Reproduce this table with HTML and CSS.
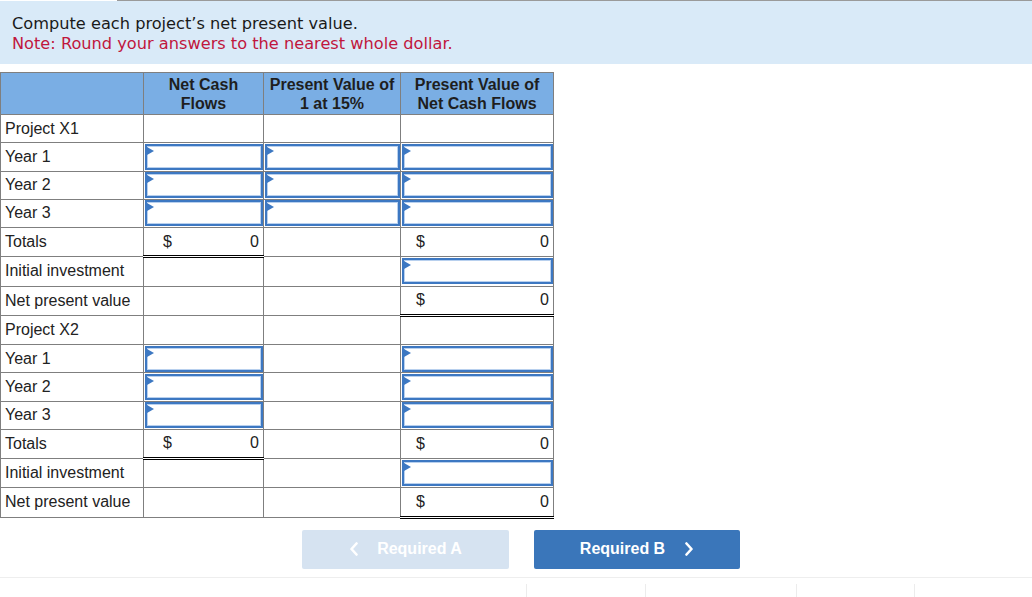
FILE: index.html
```html
<!DOCTYPE html>
<html>
<head>
<meta charset="utf-8">
<link rel="stylesheet" href="styles.css">
</head>
<body>
<div class="topline"><div class="topline-gap"></div><div class="topline-bar"></div></div>
<div class="banner">
  <p class="q">Compute each project’s net present value.</p>
  <p class="note">Note: Round your answers to the nearest whole dollar.</p>
</div>
<table class="grid">
  <colgroup>
    <col class="c0"><col class="c1"><col class="c2"><col class="c3">
  </colgroup>
  <thead>
    <tr>
      <th></th>
      <th>Net Cash<br>Flows</th>
      <th>Present Value of<br>1 at 15%</th>
      <th>Present Value of<br>Net Cash Flows</th>
    </tr>
  </thead>
  <tbody>
    <tr><td class="lbl">Project X1</td><td></td><td></td><td></td></tr>
    <tr><td class="lbl">Year 1</td><td class="in"><div class="box"></div></td><td class="in"><div class="box"></div></td><td class="in"><div class="box"></div></td></tr>
    <tr><td class="lbl">Year 2</td><td class="in"><div class="box"></div></td><td class="in"><div class="box"></div></td><td class="in"><div class="box"></div></td></tr>
    <tr><td class="lbl">Year 3</td><td class="in"><div class="box"></div></td><td class="in"><div class="box"></div></td><td class="in"><div class="box"></div></td></tr>
    <tr><td class="lbl">Totals</td><td class="val dbl top"><span>$</span><span>0</span></td><td></td><td class="val top wide"><span>$</span><span>0</span></td></tr>
    <tr><td class="lbl">Initial investment</td><td></td><td></td><td class="in"><div class="box"></div></td></tr>
    <tr><td class="lbl">Net present value</td><td></td><td></td><td class="val dbl top wide"><span>$</span><span>0</span></td></tr>
    <tr><td class="lbl">Project X2</td><td></td><td></td><td></td></tr>
    <tr><td class="lbl">Year 1</td><td class="in"><div class="box"></div></td><td></td><td class="in"><div class="box"></div></td></tr>
    <tr><td class="lbl">Year 2</td><td class="in"><div class="box"></div></td><td></td><td class="in"><div class="box"></div></td></tr>
    <tr><td class="lbl">Year 3</td><td class="in"><div class="box"></div></td><td></td><td class="in"><div class="box"></div></td></tr>
    <tr><td class="lbl">Totals</td><td class="val dbl top"><span>$</span><span>0</span></td><td></td><td class="val top wide"><span>$</span><span>0</span></td></tr>
    <tr><td class="lbl">Initial investment</td><td></td><td></td><td class="in"><div class="box"></div></td></tr>
    <tr><td class="lbl">Net present value</td><td></td><td></td><td class="val dbl top wide"><span>$</span><span>0</span></td></tr>
  </tbody>
</table>
<div class="nav">
  <div class="btn btn-off"><svg class="chev chev-l" width="10" height="14" viewBox="0 0 10 14"><path d="M7.5 1.5 L2.5 7 L7.5 12.5" fill="none" stroke="#fff" stroke-width="2.6" stroke-linecap="round" stroke-linejoin="round"/></svg>Required A</div>
  <div class="btn btn-on">Required B<svg class="chev chev-r" width="10" height="14" viewBox="0 0 10 14"><path d="M2.5 1.5 L7.5 7 L2.5 12.5" fill="none" stroke="#fff" stroke-width="2.6" stroke-linecap="round" stroke-linejoin="round"/></svg></div>
</div>
<div class="footer">
  <div class="fcell f1"></div>
  <div class="fcell f2"></div>
  <div class="fcell f3"></div>
  <div class="fcell f4"></div>
  <div class="fcell f5"></div>
</div>
</body>
</html>
```
FILE: styles.css
```css
html, body {
  margin: 0;
  padding: 0;
  background: #fff;
  width: 1032px;
  overflow: hidden;
}
.topline {
  display: flex;
  height: 1px;
}
.topline-gap { width: 117px; }
.topline-bar { flex: 1; background: #9a9a9a; }
.banner {
  background: #d9eaf8;
  height: 63px;
  padding: 13px 0 0 12px;
  box-sizing: border-box;
  font-family: "DejaVu Sans", Verdana, sans-serif;
  font-size: 16.2px;
  line-height: 20px;
}
.banner p { margin: 0; }
.q { color: #1a1a1a; }
.note { color: #c0163d; }

.grid {
  margin-top: 8px;
  border-collapse: collapse;
  font-family: "Liberation Sans", Arial, sans-serif;
  font-size: 16px;
  color: #222;
  table-layout: fixed;
  width: 554px;
}
.c0 { width: 143px; }
.c1 { width: 120px; }
.c2 { width: 137px; }
.c3 { width: 153px; }
.grid th, .grid td {
  border: 1px solid #7f7f7f;
}
.grid th {
  background: #7aaee4;
  font-weight: bold;
  height: 41px;
  padding: 0;
  line-height: 19px;
  color: #1e1e1e;
  vertical-align: middle;
}
.grid td {
  height: 27.25px;
  padding: 0;
  line-height: 18px;
}
.lbl {
  padding-left: 4px !important;
  white-space: nowrap;
}
.in { position: relative; }
.box {
  height: 22px;
  margin: 0 0 0 1px;
  border: 2px solid #3d78c2;
  box-shadow: inset 0 0 0 1px #b8d0ee;
  position: relative;
}
.box::before {
  content: "";
  position: absolute;
  left: 0;
  top: 1px;
  border-left: 7px solid #3d78c2;
  border-top: 4px solid transparent;
  border-bottom: 4px solid transparent;
}
.val span:first-child {
  padding-left: 19px;
}
.val.wide span:first-child { padding-left: 15px; }
.val {
  white-space: nowrap;
}
.val span:last-child {
  float: right;
  padding-right: 4px;
}
.top { border-top: 1px solid #000 !important; }
.dbl { border-bottom: 3px double #000 !important; }

.nav {
  display: flex;
  gap: 25px;
  margin: 11px 0 0 302px;
}
.btn {
  width: 207px;
  height: 39px;
  border-radius: 2px;
  display: flex;
  align-items: center;
  justify-content: center;
  font-family: "Liberation Sans", Arial, sans-serif;
  font-weight: bold;
  font-size: 16px;
  color: #fff;
}
.btn-off { background: #d6e3f1; }
.btn-on { background: #3a76ba; width: 206px; }
.chev-l { margin-right: 18px; }
.chev-r { margin-left: 19px; }

.footer {
  margin-top: 8px;
  border-top: 1px solid #eeeeee;
  display: flex;
  height: 20px;
  padding-top: 6px;
}
.fcell { border-right: 1px solid #ececec; }
.f1 { width: 526px; }
.f2 { width: 118px; }
.f3 { width: 150px; }
.f4 { width: 117px; }
.f5 { border-right: none; flex: 1; }
```
